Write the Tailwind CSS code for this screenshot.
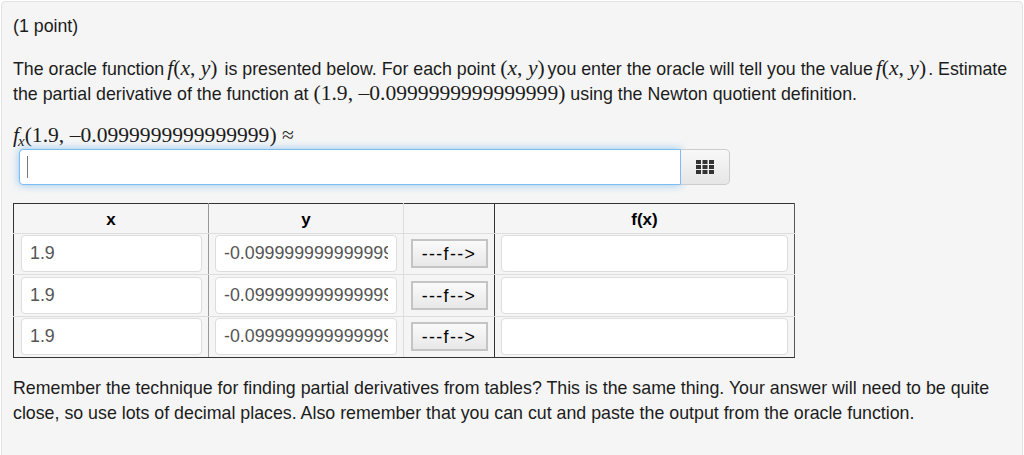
<!DOCTYPE html>
<html lang="en">
<head>
    <meta charset="UTF-8">
    <title>Oracle function</title>
    <script src="https://cdn.jsdelivr.net/npm/@tailwindcss/browser@4"></script>
</head>
<body class="bg-white h-[455px] overflow-hidden font-['Liberation_Sans',Arial,sans-serif] text-[17.8px] text-[#1c1c1c]">
    <div class="ml-px mr-px mt-px h-[460px] bg-[#f5f5f5] border border-[#e3e3e3] rounded-sm pl-[11px] pr-3 pt-[12px]">
        <p class="leading-[25px]">(1 point)</p>

        <p class="mt-[18px] h-[25px] leading-[25px] whitespace-nowrap">The oracle function <span class="font-['Liberation_Serif',serif] text-[21.6px] leading-none italic -ml-[2px]">f</span><span class="font-['Liberation_Serif',serif] text-[21.6px] leading-none mr-[2px]">(<i>x</i>, <i>y</i>)</span> is presented below. For each point <span class="font-['Liberation_Serif',serif] text-[21.6px] leading-none -mr-[2px]">(<i>x</i>, <i>y</i>)</span> you enter the oracle will tell you the value <span class="font-['Liberation_Serif',serif] text-[21.6px] leading-none italic -ml-[2px]">f</span><span class="font-['Liberation_Serif',serif] text-[21.6px] leading-none mr-[2px]">(<i>x</i>, <i>y</i>)</span>. Estimate</p>
        <p class="h-[25px] leading-[25px] whitespace-nowrap">the partial derivative of the function at <span class="font-['Liberation_Serif',serif] text-[21.6px] leading-none">(1.9, –0.0999999999999999)</span> using the Newton quotient definition.</p>

        <p class="mt-[16px] h-[25px] leading-[25px] whitespace-nowrap font-['Liberation_Serif',serif] text-[21.6px]"><i>f<sub class="text-[15px] -ml-px">x</sub></i>(1.9, –0.0999999999999999) ≈</p>

        <div class="flex mt-px ml-[6px] w-[711px] h-[36px]">
            <div class="flex-1 bg-white border border-[#7cbcf0] rounded-l-[4px] shadow-[0_0_8px_rgba(82,168,236,0.6)] flex items-center pl-[7px]">
                <div class="w-px h-[22px] bg-[#777]"></div>
            </div>
            <div class="w-[49px] border border-l-0 border-[#ccc] rounded-r-[5px] bg-gradient-to-b from-[#f8f8f8] to-[#e6e6e6] flex items-center justify-center">
                <svg width="18" height="14" viewBox="0 0 18 14" fill="#333">
                    <rect x="0" y="0" width="5" height="4"/><rect x="6.5" y="0" width="5" height="4"/><rect x="13" y="0" width="5" height="4"/>
                    <rect x="0" y="5" width="5" height="4"/><rect x="6.5" y="5" width="5" height="4"/><rect x="13" y="5" width="5" height="4"/>
                    <rect x="0" y="10" width="5" height="4"/><rect x="6.5" y="10" width="5" height="4"/><rect x="13" y="10" width="5" height="4"/>
                </svg>
            </div>
        </div>

        <table class="mt-[18px] table-fixed border-collapse border border-[#333] w-[782px]">
            <thead>
                <tr class="h-[29px]">
                    <th class="w-[195px] border border-[#ddd] border-r-[#999] border-t-[#333] border-l-[#333] font-bold text-[17px] text-black pt-[3px]">x</th>
                    <th class="w-[195px] border border-[#ddd] border-t-[#333] font-bold text-[17px] text-black pt-[3px]">y</th>
                    <th class="w-[91px] border border-[#ddd] border-r-[#333] border-t-[#333]"></th>
                    <th class="border border-[#ddd] border-l-[#333] border-t-[#333] border-r-[#555] font-bold text-[17px] text-black pt-[3px]">f(x)</th>
                </tr>
            </thead>
            <tbody>
                <tr class="h-[41px]">
                    <td class="border border-[#ddd] border-l-[#333] border-r-[#999] pl-[7px] pr-[6px]"><input value="1.9" class="block w-full h-[37px] bg-white border border-[#ddd] rounded-[4px] px-2 text-[#555]"></td>
                    <td class="border border-[#ddd] px-[6px]"><input value="-0.0999999999999999" class="block w-full h-[37px] bg-white border border-[#ddd] rounded-[4px] px-2 text-[#555]"></td>
                    <td class="border border-[#ddd] border-r-[#333] text-center"><button class="w-[77px] h-[29px] border-2 border-[#c4c4c4] bg-gradient-to-b from-[#fafafa] to-[#e8e8e8] text-black tracking-[1.4px]">---f--&gt;</button></td>
                    <td class="border border-[#ddd] border-l-[#333] border-r-[#555] px-[6px]"><input class="block w-full h-[37px] bg-white border border-[#ddd] rounded-[4px] px-2 text-[#555]"></td>
                </tr>
                <tr class="h-[42px]">
                    <td class="border border-[#ddd] border-l-[#333] border-r-[#999] pl-[7px] pr-[6px]"><input value="1.9" class="block w-full h-[37px] bg-white border border-[#ddd] rounded-[4px] px-2 text-[#555]"></td>
                    <td class="border border-[#ddd] px-[6px]"><input value="-0.0999999999999999" class="block w-full h-[37px] bg-white border border-[#ddd] rounded-[4px] px-2 text-[#555]"></td>
                    <td class="border border-[#ddd] border-r-[#333] text-center"><button class="w-[77px] h-[29px] border-2 border-[#c4c4c4] bg-gradient-to-b from-[#fafafa] to-[#e8e8e8] text-black tracking-[1.4px]">---f--&gt;</button></td>
                    <td class="border border-[#ddd] border-l-[#333] border-r-[#555] px-[6px]"><input class="block w-full h-[37px] bg-white border border-[#ddd] rounded-[4px] px-2 text-[#555]"></td>
                </tr>
                <tr class="h-[41px]">
                    <td class="border border-[#ddd] border-l-[#333] border-b-[#333] border-r-[#999] pl-[7px] pr-[6px]"><input value="1.9" class="block w-full h-[37px] bg-white border border-[#ddd] rounded-[4px] px-2 text-[#555]"></td>
                    <td class="border border-[#ddd] border-b-[#333] px-[6px]"><input value="-0.0999999999999999" class="block w-full h-[37px] bg-white border border-[#ddd] rounded-[4px] px-2 text-[#555]"></td>
                    <td class="border border-[#ddd] border-b-[#333] border-r-[#333] text-center"><button class="w-[77px] h-[29px] border-2 border-[#c4c4c4] bg-gradient-to-b from-[#fafafa] to-[#e8e8e8] text-black tracking-[1.4px]">---f--&gt;</button></td>
                    <td class="border border-[#ddd] border-l-[#333] border-b-[#333] border-r-[#555] px-[6px]"><input class="block w-full h-[37px] bg-white border border-[#ddd] rounded-[4px] px-2 text-[#555]"></td>
                </tr>
            </tbody>
        </table>

        <p class="mt-[18px] leading-[25px] whitespace-nowrap">Remember the technique for finding partial derivatives from tables? This is the same thing. Your answer will need to be quite</p>
        <p class="leading-[25px] whitespace-nowrap">close, so use lots of decimal places. Also remember that you can cut and paste the output from the oracle function.</p>
    </div>
</body>
</html>
